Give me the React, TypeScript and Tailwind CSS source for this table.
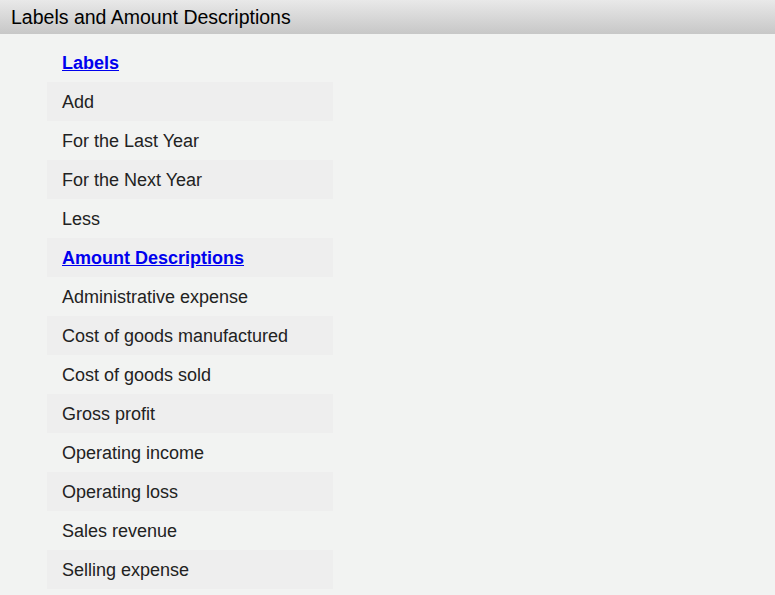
import React from "react";

const rows: { text: string; link?: boolean }[] = [
  { text: "Labels", link: true },
  { text: "Add" },
  { text: "For the Last Year" },
  { text: "For the Next Year" },
  { text: "Less" },
  { text: "Amount Descriptions", link: true },
  { text: "Administrative expense" },
  { text: "Cost of goods manufactured" },
  { text: "Cost of goods sold" },
  { text: "Gross profit" },
  { text: "Operating income" },
  { text: "Operating loss" },
  { text: "Sales revenue" },
  { text: "Selling expense" },
];

export default function App() {
  return (
    <div
      className="w-[775px] h-[595px] bg-[#f2f3f2] overflow-hidden"
      style={{ fontFamily: '"Liberation Sans", Arial, sans-serif' }}
    >
      <div className="h-[34px] flex items-center pl-[11px] pt-[2px] bg-gradient-to-b from-[#e9e9e9] to-[#c7c7c7] text-[19.5px] text-black">
        Labels and Amount Descriptions
      </div>
      <div className="mt-[9px] ml-[47px] w-[286px] flex flex-col">
        {rows.map((r, i) => (
          <div
            key={i}
            className={
              "h-[39px] flex items-center pl-[15px] pt-[2px] text-[18px] " +
              (i % 2 === 1 ? "bg-[#eeeeee]" : "")
            }
          >
            {r.link ? (
              <a href="#" className="font-bold underline text-[#0000ee]">
                {r.text}
              </a>
            ) : (
              <span className="text-[#222222]">{r.text}</span>
            )}
          </div>
        ))}
      </div>
    </div>
  );
}
